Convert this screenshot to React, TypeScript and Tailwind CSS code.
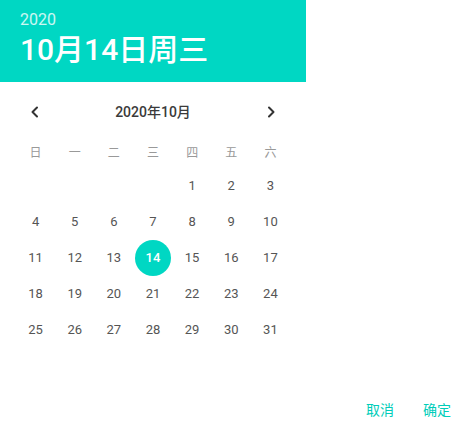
const TEAL = "bg-[#00d7c3]";

const weekdays = ["日", "一", "二", "三", "四", "五", "六"];

function buildDays(): (number | null)[] {
  const cells: (number | null)[] = [null, null, null, null];
  for (let d = 1; d <= 31; d++) cells.push(d);
  while (cells.length % 7 !== 0) cells.push(null);
  return cells;
}

function Chevron({ dir }: { dir: "left" | "right" }) {
  return (
    <svg width="10" height="12" viewBox="0 0 10 12" fill="none">
      <path
        d={dir === "left" ? "M7 1.5 L2.5 6 L7 10.5" : "M3 1.5 L7.5 6 L3 10.5"}
        stroke="#333"
        strokeWidth="2"
        strokeLinecap="round"
        strokeLinejoin="round"
      />
    </svg>
  );
}

export default function App() {
  const days = buildDays();
  const selected = 14;

  return (
    <div
      className="flex h-[435px] w-[474px] flex-col bg-white"
      style={{ fontFamily: 'Roboto, "Noto Sans CJK SC", sans-serif' }}
    >
      <div className="w-[306px]">
        <div className={`h-[82px] ${TEAL} px-5 pt-[10px] text-white`}>
          <div className="text-[16px] leading-5 text-white/80">2020</div>
          <div className="mt-[2px] text-[30px] font-medium leading-9">10月14日周三</div>
        </div>

        <div className="px-4 pt-3">
          <div className="flex h-9 items-center justify-between px-[14px]">
            <Chevron dir="left" />
            <span className="text-[14px] font-medium text-[#3a3a3a]">2020年10月</span>
            <Chevron dir="right" />
          </div>

          <div className="mt-2 grid h-[30px] grid-cols-7">
            {weekdays.map((w) => (
              <div key={w} className="flex items-center justify-center text-[12px] text-[#999]">
                {w}
              </div>
            ))}
          </div>

          <div className="grid grid-cols-7">
            {days.map((d, i) => (
              <div key={i} className="flex h-9 items-center justify-center">
                {d === selected ? (
                  <span className={`flex h-9 w-9 items-center justify-center rounded-full ${TEAL} text-[13px] font-medium text-white`}>
                    {d}
                  </span>
                ) : (
                  <span className="text-[13px] text-[#555]">{d ?? ""}</span>
                )}
              </div>
            ))}
          </div>
        </div>
      </div>

      <div className="mt-auto flex justify-end gap-[5px] pb-[7px] pr-[11px]">
        <button className="h-9 px-3 text-[14px] text-[#00cdb9]">取消</button>
        <button className="h-9 px-3 text-[14px] text-[#00cdb9]">确定</button>
      </div>
    </div>
  );
}
